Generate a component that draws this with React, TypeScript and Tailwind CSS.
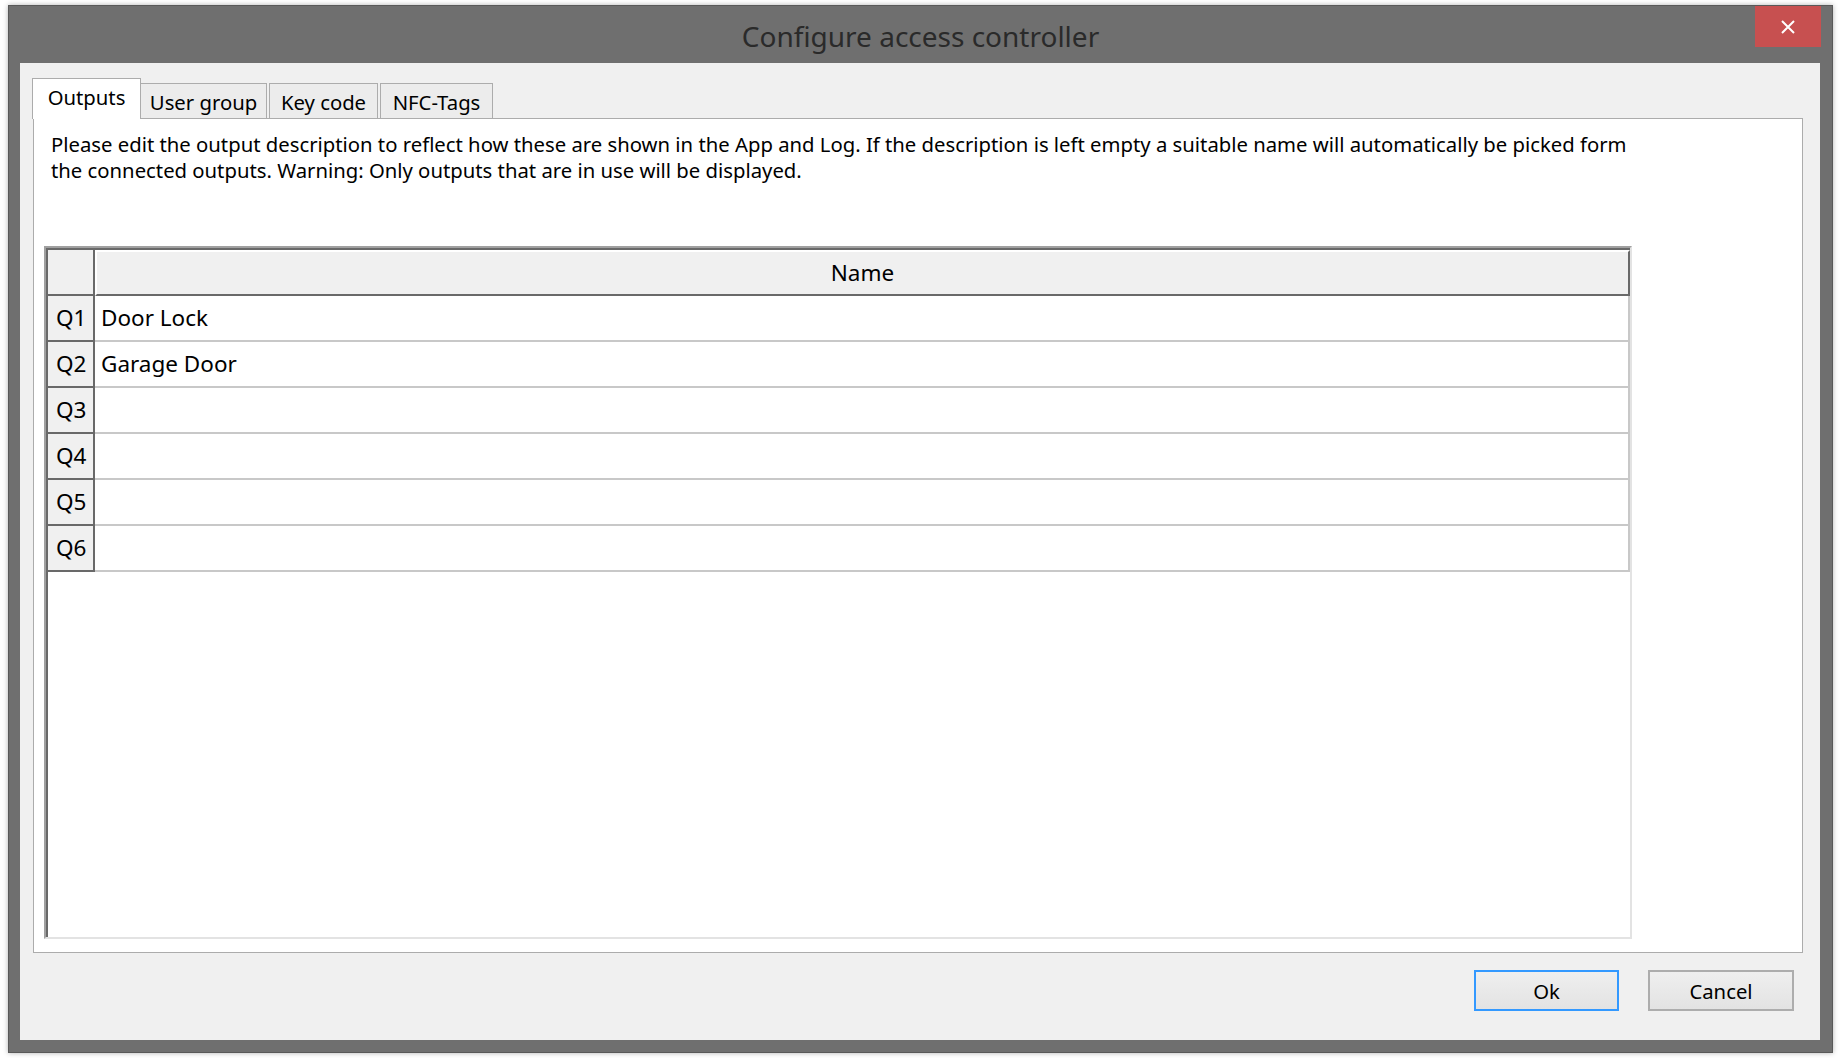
const rows = [
  { id: "Q1", name: "Door Lock" },
  { id: "Q2", name: "Garage Door" },
  { id: "Q3", name: "" },
  { id: "Q4", name: "" },
  { id: "Q5", name: "" },
  { id: "Q6", name: "" },
];

function TitleBar() {
  return (
    <div className="relative flex h-[57px] items-center justify-center pt-[3px]">
      <span className="text-[28px] text-[#2a2a2a]">Configure access controller</span>
      <button className="absolute right-[11px] top-0 flex h-[41px] w-[66px] items-center justify-center bg-[#c75050]">
        <svg width="14" height="14" viewBox="0 0 14 14">
          <path d="M1 1L13 13M13 1L1 13" stroke="white" strokeWidth="2" />
        </svg>
      </button>
    </div>
  );
}

function TabStrip() {
  return (
    <div className="flex h-[55px] items-end pl-[12px] text-[20.3px] leading-[26px]">
      <div className="relative z-10 -mb-px h-[41px] w-[109px] border border-b-0 border-[#acacac] bg-white pt-[5px] text-center">
        Outputs
      </div>
      <div className="h-[35px] w-[126px] border-r border-t border-[#acacac] bg-[#ececec] pt-[5px] text-center">
        User group
      </div>
      <div className="ml-[2px] h-[35px] w-[109px] border border-b-0 border-[#acacac] bg-[#ececec] pt-[5px] text-center">
        Key code
      </div>
      <div className="ml-[2px] h-[35px] w-[113px] border border-b-0 border-[#acacac] bg-[#ececec] pt-[5px] text-center">
        NFC-Tags
      </div>
    </div>
  );
}

function OutputGrid() {
  return (
    <div className="h-[693px] w-[1588px] border-2 border-b-[#e3e3e3] border-l-[#a0a0a0] border-r-[#e3e3e3] border-t-[#a0a0a0]">
      <div className="h-full border-l-2 border-t-2 border-[#696969] text-[22.5px]">
        <div className="flex h-[46px]">
          <div className="w-[47px] border-b-2 border-r-2 border-[#696969] bg-[#f0f0f0]" />
          <div className="flex flex-1 items-center justify-center border-2 border-b-[#696969] border-l-white border-r-[#696969] border-t-white bg-[#f0f0f0]">
            Name
          </div>
        </div>
        {rows.map((row) => (
          <div className="flex h-[46px]" key={row.id}>
            <div className="flex w-[47px] items-center border-b-2 border-r-2 border-[#696969] bg-[#f0f0f0] pl-[8px]">
              {row.id}
            </div>
            <div className="flex flex-1 items-center border-b-2 border-r-2 border-[#c8c8c8] pl-[6px]">
              {row.name}
            </div>
          </div>
        ))}
      </div>
    </div>
  );
}

export default function App() {
  return (
    <div className="min-h-screen w-full bg-white pl-[8px] pt-[5px] font-['Segoe_UI','Noto_Sans',sans-serif] text-black">
      <div className="flex h-[1048px] w-[1825px] flex-col border border-[#595959] bg-[#6f6f6f] shadow-[0_0_5px_rgba(0,0,0,0.3)]">
        <TitleBar />
        <div className="mb-[12px] ml-[11px] mr-[12px] flex flex-1 flex-col bg-[#f0f0f0]">
          <TabStrip />
          <div className="ml-[13px] h-[835px] w-[1770px] border border-[#acacac] bg-white px-[10px] pt-[12px]">
            <p className="h-[115px] whitespace-nowrap pl-[7px] text-[20.3px] leading-[26px]">
              Please edit the output description to reflect how these are shown in the App and Log. If the description is left empty a suitable name will automatically be picked form
              <br />
              the connected outputs. Warning: Only outputs that are in use will be displayed.
            </p>
            <OutputGrid />
          </div>
          <div className="mt-[17px] flex justify-end gap-[29px] pr-[26px] text-[20.3px] leading-[26px]">
            <button className="h-[41px] w-[145px] border-2 border-[#3399ff] bg-linear-to-b from-[#efefef] to-[#e3e3e3]">
              Ok
            </button>
            <button className="h-[41px] w-[146px] border-2 border-[#adadad] bg-linear-to-b from-[#efefef] to-[#e3e3e3]">
              Cancel
            </button>
          </div>
        </div>
      </div>
    </div>
  );
}
